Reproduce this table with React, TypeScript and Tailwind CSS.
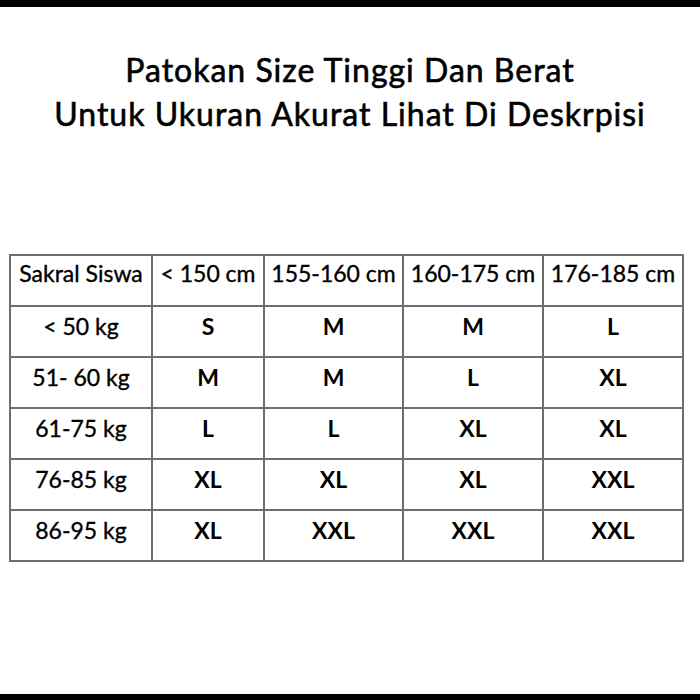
import React from "react";

const header = ["Sakral Siswa", "< 150 cm", "155-160 cm", "160-175 cm", "176-185 cm"];
const rows: string[][] = [
  ["< 50 kg", "S", "M", "M", "L"],
  ["51- 60 kg", "M", "M", "L", "XL"],
  ["61-75 kg", "L", "L", "XL", "XL"],
  ["76-85 kg", "XL", "XL", "XL", "XXL"],
  ["86-95 kg", "XL", "XXL", "XXL", "XXL"],
];

export default function App() {
  return (
    <div className="w-[700px] h-[700px] bg-white flex flex-col overflow-hidden">
      <div className="h-[7px] bg-black shrink-0" />
      <div
        className="pt-[41px] flex flex-col items-center text-[32px] leading-[44px] tracking-[1px] text-black [-webkit-text-stroke:0.6px_black]"
        style={{ fontFamily: "Lato, 'Open Sans', sans-serif" }}
      >
        <div>Patokan Size Tinggi Dan Berat</div>
        <div>Untuk Ukuran Akurat Lihat Di Deskrpisi</div>
      </div>
      <div className="mt-[118px] ml-[9px]">
        <div
          className="grid grid-cols-[140px_110px_137px_138px_138px] auto-rows-[49px] gap-[2px] p-[2px] bg-[#6e6e6e] w-fit text-[23px] leading-[30px] text-black"
          style={{ fontFamily: "Lato, 'Open Sans', sans-serif" }}
        >
          {header.map((h, i) => (
            <div
              key={"h" + i}
              className="bg-white flex justify-center pt-[2px] whitespace-nowrap [-webkit-text-stroke:0.35px_black]"
            >
              {h}
            </div>
          ))}
          {rows.map((r, ri) =>
            r.map((c, ci) => (
              <div
                key={ri + "-" + ci}
                className={
                  "bg-white flex justify-center pt-[4px] whitespace-nowrap " +
                  (ci === 0 ? "[-webkit-text-stroke:0.35px_black]" : "font-bold")
                }
              >
                {c}
              </div>
            ))
          )}
        </div>
      </div>
      <div className="flex-1" />
      <div className="h-[6px] bg-black shrink-0" />
    </div>
  );
}
